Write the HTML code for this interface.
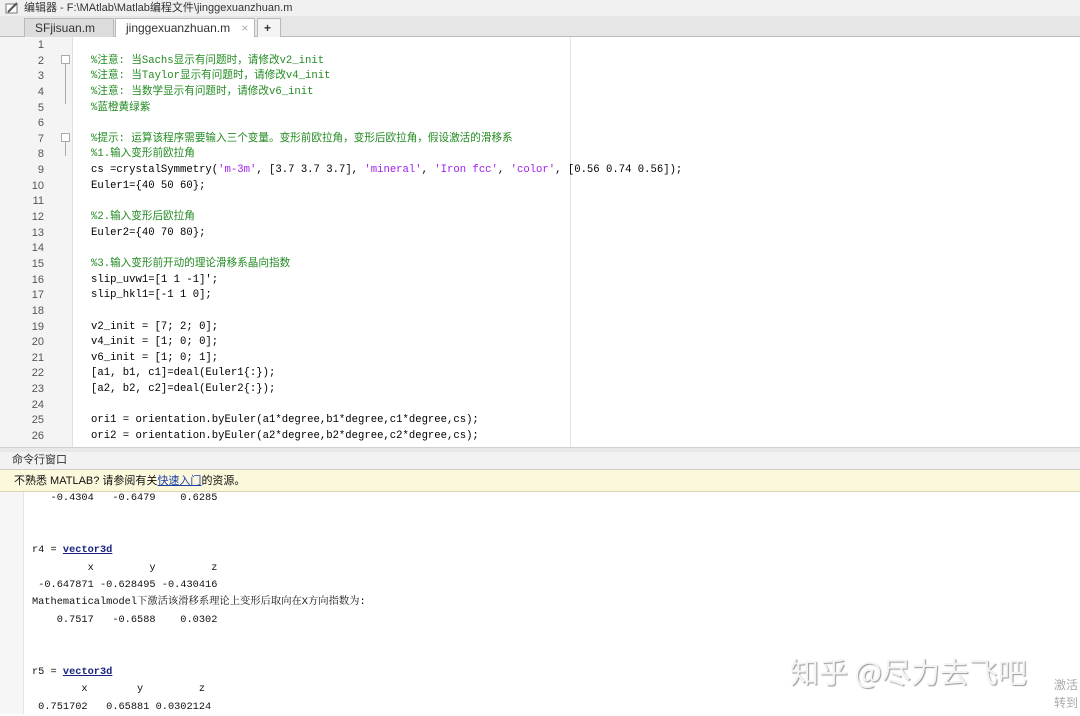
<!DOCTYPE html>
<html><head><meta charset="utf-8"><style>
*{margin:0;padding:0;box-sizing:border-box}
body{width:1080px;height:714px;overflow:hidden;background:#fff;position:relative;font-family:"Liberation Sans","Noto Sans CJK SC",sans-serif}
.abs{position:absolute}
#title{left:0;top:0;width:1080px;height:16px;background:#f0f0f0;font-size:11px;color:#333;line-height:16px;padding-left:24px}
#tabs{left:0;top:16px;width:1080px;height:21px;background:#e6e6e6;border-bottom:1px solid #bbb}
.tab{position:absolute;top:2px;height:19px;border:1px solid #b8b8b8;border-bottom:none;font-size:12px;line-height:18px;padding-left:10px;color:#333}
#gutter{left:0;top:37px;width:73px;height:410px;background:#f4f4f4;border-right:1px solid #e0e0e0}
.code{font-family:"Liberation Mono","Noto Sans CJK SC",monospace;font-size:10.6px;white-space:pre;color:#000}
.ln{position:absolute;left:0;width:44px;text-align:right;font-family:"Liberation Sans",sans-serif;font-size:11px;color:#555}
.c{color:#228b22}.s{color:#a020f0}
.cw{font-family:"Liberation Mono","Noto Serif CJK SC",monospace;font-size:10px;white-space:pre;color:#111}
</style></head><body>
<div id="title" class="abs">编辑器 - F:\MAtlab\Matlab编程文件\jinggexuanzhuan.m</div>
<svg class="abs" style="left:5px;top:2px" width="14" height="12"><rect x="1" y="2" width="11" height="9" fill="#fff" stroke="#777"/><line x1="3" y1="10" x2="12" y2="1" stroke="#555" stroke-width="2"/></svg>
<div id="tabs" class="abs">
<div class="tab" style="left:24px;width:90px;background:#dcdcdc">SFjisuan.m <span style="color:#aaa;margin-left:8px">×</span></div>
<div class="tab" style="left:115px;width:140px;background:#fff">jinggexuanzhuan.m <span style="color:#aaa;margin-left:8px">×</span></div>
<div class="tab" style="left:257px;width:24px;background:#f4f4f4;padding-left:6px;font-weight:bold">+</div>
</div>
<div id="gutter" class="abs"></div>
<div class="abs" style="left:570px;top:37px;width:1px;height:410px;background:#e4e4e4"></div>
<div class="abs" style="left:61px;top:55px;width:9px;height:9px;border:1px solid #aaa;background:#fff"></div>
<div class="abs" style="left:65px;top:64px;width:1px;height:40px;background:#aaa"></div>
<div class="abs" style="left:61px;top:133px;width:9px;height:9px;border:1px solid #aaa;background:#fff"></div>
<div class="abs" style="left:65px;top:142px;width:1px;height:14px;background:#aaa"></div>
<div id="lines"></div>
<script>
var L=[
'',
'<span class="c">%注意: 当Sachs显示有问题时，请修改v2_init</span>',
'<span class="c">%注意: 当Taylor显示有问题时，请修改v4_init</span>',
'<span class="c">%注意: 当数学显示有问题时，请修改v6_init</span>',
'<span class="c">%蓝橙黄绿紫</span>',
'',
'<span class="c">%提示: 运算该程序需要输入三个变量。变形前欧拉角，变形后欧拉角，假设激活的滑移系</span>',
'<span class="c">%1.输入变形前欧拉角</span>',
'cs =crystalSymmetry(<span class="s">\'m-3m\'</span>, [3.7 3.7 3.7], <span class="s">\'mineral\'</span>, <span class="s">\'Iron fcc\'</span>, <span class="s">\'color\'</span>, [0.56 0.74 0.56]);',
'Euler1={40 50 60};',
'',
'<span class="c">%2.输入变形后欧拉角</span>',
'Euler2={40 70 80};',
'',
'<span class="c">%3.输入变形前开动的理论滑移系晶向指数</span>',
'slip_uvw1=[1 1 -1]\';',
'slip_hkl1=[-1 1 0];',
'',
'v2_init = [7; 2; 0];',
'v4_init = [1; 0; 0];',
'v6_init = [1; 0; 1];',
'[a1, b1, c1]=deal(Euler1{:});',
'[a2, b2, c2]=deal(Euler2{:});',
'',
'ori1 = orientation.byEuler(a1*degree,b1*degree,c1*degree,cs);',
'ori2 = orientation.byEuler(a2*degree,b2*degree,c2*degree,cs);'];
var h='';
for(var i=0;i<L.length;i++){var y=37+i*15.64;
h+='<div class="ln" style="top:'+y+'px;line-height:16px">'+(i+1)+'</div>';
h+='<div class="abs code" style="left:91px;top:'+y+'px;line-height:16px">'+L[i]+'</div>';}
document.getElementById('lines').innerHTML=h;
</script>
<div class="abs" style="left:0;top:447px;width:1080px;height:5px;background:#e8e8e8;border-top:1px solid #d0d0d0"></div>
<div class="abs" style="left:0;top:452px;width:1080px;height:18px;background:#f2f2f2;border-bottom:1px solid #ccc;font-size:11px;line-height:17px;padding-left:12px;color:#333">命令行窗口</div>
<div class="abs" style="left:0;top:492px;width:24px;height:222px;background:#f6f6f6;border-right:1px solid #e6e6e6"></div>
<div class="abs cw" style="left:32px;top:490px;line-height:17.4px;font-size:10.3px">   -0.4304   -0.6479    0.6285


r4 = <b style="color:#1a237e;text-decoration:underline">vector3d</b>
         x         y         z
 -0.647871 -0.628495 -0.430416
Mathematicalmodel下激活该滑移系理论上变形后取向在X方向指数为:
    0.7517   -0.6588    0.0302


r5 = <b style="color:#1a237e;text-decoration:underline">vector3d</b>
        x        y         z
 0.751702   0.65881 0.0302124</div>
<div class="abs" style="left:0;top:470px;width:1080px;height:22px;background:#fbf8dc;border-bottom:1px solid #d8d4b0;font-size:11px;line-height:22px;padding-left:14px;color:#111">不熟悉 MATLAB? 请参阅有关<span style="color:#1a3ea8;text-decoration:underline">快速入门</span>的资源。</div>
<div class="abs" style="left:790px;top:650px;font-size:29px;color:#f4f4f4;text-shadow:1px 1px 1px #999;font-family:'Noto Sans CJK SC',sans-serif">知乎 @尽力去飞吧</div>
<div class="abs" style="left:1054px;top:676px;font-size:12px;color:#aaa;line-height:18px">激活<br>转到</div>
</body></html>
